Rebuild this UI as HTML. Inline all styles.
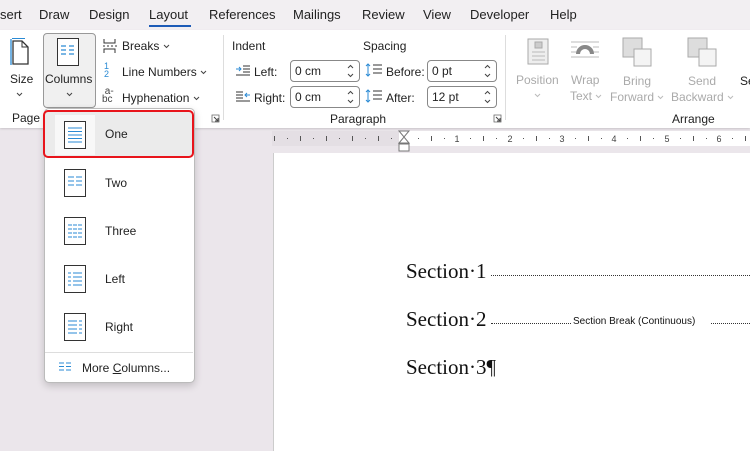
<!DOCTYPE html>
<html><head><meta charset="utf-8"><style>
*{margin:0;padding:0;box-sizing:border-box}
body{width:750px;height:451px;overflow:hidden;background:#ebe6eb;font-family:"Liberation Sans",sans-serif;position:relative;color:#222}
.a{position:absolute;white-space:nowrap}
.tabs{left:0;top:0;width:750px;height:30px;background:#f2eff2}
.tab{top:7px;font-size:13px;color:#222}
.rib{left:0;top:30px;width:750px;height:98px;background:#fff;box-shadow:0 1px 2px rgba(0,0,0,.15)}
.t12{font-size:12px}
.gray{color:#aaa}
.sep{width:1px;background:#ddd}
.spin{width:70px;height:22px;border:1px solid #888;border-radius:4px;font-size:12px;padding:3px 4px;background:#fff}
.spin svg{position:absolute;right:5px;top:3px}
.doc{width:26px;height:28px;border:1.5px solid #333;background:#fff}
.menu{left:44px;top:108px;width:151px;height:275px;background:#fff;border:1px solid #bbb;border-radius:5px;box-shadow:0 3px 8px rgba(0,0,0,.18)}
.item{font-size:12px}
.ser{font-family:"Liberation Serif",serif;font-size:21px;color:#111}
.dots{border-bottom:1px dotted #333;height:1px}
.r{position:absolute;top:134px;font-size:9px;color:#444;transform:translateX(-50%)}
.tk{position:absolute;top:136px;width:1px;height:5px;background:#555}
.dt{position:absolute;top:138px;width:1px;height:1px;background:#555}
.cv{display:inline-block;vertical-align:middle}
</style></head><body>
<div class="a tabs"></div>
<div class="a tab" style="left:0">sert</div>
<div class="a tab" style="left:39px">Draw</div>
<div class="a tab" style="left:89px">Design</div>
<div class="a tab" style="left:149px">Layout</div>
<div class="a" style="left:149px;top:25px;width:42px;height:2px;background:#1d5bb7"></div>
<div class="a tab" style="left:209px">References</div>
<div class="a tab" style="left:293px">Mailings</div>
<div class="a tab" style="left:362px">Review</div>
<div class="a tab" style="left:423px">View</div>
<div class="a tab" style="left:470px">Developer</div>
<div class="a tab" style="left:550px">Help</div>

<div class="a rib"></div>
<svg class="a" style="left:6px;top:37px" width="24" height="30"><path d="M7 4h9l6 6v17H7z" fill="#fff" stroke="#333" stroke-width="1.3"/><path d="M16 4v6h6" fill="none" stroke="#333"/><path d="M5 2v26" stroke="#2a8ad4" stroke-width="1.3"/><path d="M6 1.5h13" stroke="#2a8ad4"/></svg>
<div class="a t12" style="left:10px;top:72px">Size</div>
<svg class="a" style="left:16px;top:92px" width="7" height="5"><path d="M1 1l2.5 2.5L6 1" fill="none" stroke="#444"/></svg>
<div class="a t12" style="left:12px;top:111px">Page</div>
<div class="a" style="left:43px;top:33px;width:53px;height:75px;background:#f0f0f0;border:1px solid #999;border-radius:4px"></div>
<div class="a doc" style="left:57px;top:38px;width:22px;height:28px;border-width:1.3px"></div>
<svg class="a" style="left:60px;top:44px" width="16" height="16"><g stroke="#2a8ad4" stroke-width="1.2"><path d="M1 2h5M9 2h5M1 6h5M9 6h5M1 10h5M9 10h5"/></g></svg>
<div class="a t12" style="left:45px;top:72px">Columns</div>
<svg class="a" style="left:66px;top:92px" width="7" height="5"><path d="M1 1l2.5 2.5L6 1" fill="none" stroke="#444"/></svg>
<svg class="a" style="left:102px;top:38px" width="16" height="16"><path d="M2 1v4h11V1M2 15v-4h11v4M1 8h2M5 8h2M9 8h2M13 8h2" fill="none" stroke="#333"/></svg>
<div class="a t12" style="left:122px;top:39px">Breaks <svg class="cv" width="7" height="5"><path d="M1 1l2.5 2.5L6 1" fill="none" stroke="#444"/></svg></div>
<div class="a" style="left:104px;top:62px;font-size:9px;color:#2a8ad4;line-height:8px">1<br>2</div>
<div class="a t12" style="left:122px;top:65px">Line Numbers <svg class="cv" width="7" height="5"><path d="M1 1l2.5 2.5L6 1" fill="none" stroke="#444"/></svg></div>
<div class="a" style="left:102px;top:88px;font-size:10px;color:#444;line-height:8px">&nbsp;a-<br>bc</div>
<div class="a t12" style="left:122px;top:91px">Hyphenation <svg class="cv" width="7" height="5"><path d="M1 1l2.5 2.5L6 1" fill="none" stroke="#444"/></svg></div>
<svg class="a" style="left:211px;top:114px" width="9" height="9"><path d="M1 1h7v7H1z" fill="none" stroke="#666" stroke-width=".8"/><path d="M3 3l4 4M7 4v3H4" fill="none" stroke="#444"/></svg>
<div class="a sep" style="left:223px;top:35px;height:85px"></div>
<div class="a t12" style="left:232px;top:39px">Indent</div>
<div class="a t12" style="left:363px;top:39px">Spacing</div>
<svg class="a" style="left:235px;top:64px" width="16" height="12"><path d="M1 5h5M4 3l2 2-2 2" fill="none" stroke="#2a8ad4"/><path d="M8 2h7M8 5h7M8 8h7M1 11h14" stroke="#333"/></svg>
<div class="a t12" style="left:254px;top:65px">Left:</div>
<div class="a spin" style="left:290px;top:60px">0 cm<svg width="7" height="14"><path d="M1 4l2.5-2.5L6 4M1 10l2.5 2.5L6 10" fill="none" stroke="#444"/></svg></div>
<svg class="a" style="left:235px;top:90px" width="16" height="12"><path d="M10 5h5M12 3l-2 2 2 2" fill="none" stroke="#2a8ad4"/><path d="M1 2h7M1 5h7M1 8h7M1 11h14" stroke="#333"/></svg>
<div class="a t12" style="left:254px;top:91px">Right:</div>
<div class="a spin" style="left:290px;top:86px">0 cm<svg width="7" height="14"><path d="M1 4l2.5-2.5L6 4M1 10l2.5 2.5L6 10" fill="none" stroke="#444"/></svg></div>
<svg class="a" style="left:365px;top:63px" width="18" height="14"><path d="M3 1v12M1 3l2-2 2 2M1 11l2 2 2-2" fill="none" stroke="#2a8ad4"/><path d="M8 2h9M8 6h9M8 10h9" stroke="#333"/></svg>
<div class="a t12" style="left:386px;top:65px">Before:</div>
<div class="a spin" style="left:427px;top:60px">0 pt<svg width="7" height="14"><path d="M1 4l2.5-2.5L6 4M1 10l2.5 2.5L6 10" fill="none" stroke="#444"/></svg></div>
<svg class="a" style="left:365px;top:89px" width="18" height="14"><path d="M3 1v12M1 3l2-2 2 2M1 11l2 2 2-2" fill="none" stroke="#2a8ad4"/><path d="M8 2h9M8 6h9M8 10h9" stroke="#333"/></svg>
<div class="a t12" style="left:386px;top:91px">After:</div>
<div class="a spin" style="left:427px;top:86px">12 pt<svg width="7" height="14"><path d="M1 4l2.5-2.5L6 4M1 10l2.5 2.5L6 10" fill="none" stroke="#444"/></svg></div>
<div class="a t12" style="left:330px;top:112px">Paragraph</div>
<svg class="a" style="left:493px;top:114px" width="9" height="9"><path d="M1 1h7v7H1z" fill="none" stroke="#666" stroke-width=".8"/><path d="M3 3l4 4M7 4v3H4" fill="none" stroke="#444"/></svg>
<div class="a sep" style="left:505px;top:35px;height:85px"></div>
<svg class="a" style="left:527px;top:38px" width="24" height="28"><rect x="1" y="1" width="20" height="25" fill="#eee" stroke="#aaa"/><rect x="8" y="4" width="7" height="6" fill="#ccc" stroke="#aaa"/><path d="M5 14h13M5 18h13M5 22h13" stroke="#bbb"/></svg>
<div class="a t12 gray" style="left:516px;top:73px">Position</div>
<svg class="a" style="left:534px;top:93px" width="7" height="5"><path d="M1 1l2.5 2.5L6 1" fill="none" stroke="#bbb"/></svg>
<svg class="a" style="left:570px;top:40px" width="30" height="20"><path d="M1 2h28M1 7h6M23 7h6M1 12h6M23 12h6M1 17h28" stroke="#bbb"/><path d="M8 14a7 7 0 0 1 14 0" fill="none" stroke="#888" stroke-width="4"/></svg>
<div class="a t12 gray" style="left:571px;top:73px">Wrap</div>
<div class="a t12 gray" style="left:570px;top:89px">Text <svg class="cv" width="7" height="5"><path d="M1 1l2.5 2.5L6 1" fill="none" stroke="#bbb"/></svg></div>
<svg class="a" style="left:622px;top:37px" width="30" height="30"><rect x="1" y="1" width="19" height="19" fill="#ddd" stroke="#aaa"/><rect x="12" y="12" width="17" height="17" fill="#f4f4f4" stroke="#aaa"/></svg>
<div class="a t12 gray" style="left:623px;top:74px">Bring</div>
<div class="a t12 gray" style="left:610px;top:90px">Forward <svg class="cv" width="7" height="5"><path d="M1 1l2.5 2.5L6 1" fill="none" stroke="#bbb"/></svg></div>
<svg class="a" style="left:687px;top:37px" width="30" height="30"><rect x="1" y="1" width="19" height="19" fill="#ddd" stroke="#aaa"/><rect x="12" y="12" width="17" height="17" fill="#f4f4f4" stroke="#aaa"/></svg>
<div class="a t12 gray" style="left:688px;top:74px">Send</div>
<div class="a t12 gray" style="left:671px;top:90px">Backward <svg class="cv" width="7" height="5"><path d="M1 1l2.5 2.5L6 1" fill="none" stroke="#bbb"/></svg></div>
<div class="a t12" style="left:740px;top:74px">Se</div>
<div class="a t12" style="left:672px;top:112px">Arrange</div>

<!-- ruler -->
<div class="a" style="left:272px;top:131px;width:127px;height:15px;background:#e4dfe4"></div>
<div class="a" style="left:399px;top:131px;width:351px;height:15px;background:#fff"></div>
<div class="tk" style="left:274px"></div><div class="dt" style="left:287px"></div><div class="tk" style="left:300px"></div><div class="dt" style="left:313px"></div><div class="tk" style="left:326px"></div><div class="dt" style="left:339px"></div><div class="tk" style="left:352px"></div><div class="dt" style="left:365px"></div><div class="tk" style="left:378px"></div><div class="dt" style="left:391px"></div>
<div class="dt" style="left:418px"></div><div class="tk" style="left:431px"></div><div class="dt" style="left:444px"></div><span class="r" style="left:457px">1</span>
<div class="dt" style="left:470px"></div><div class="tk" style="left:483px"></div><div class="dt" style="left:496px"></div><span class="r" style="left:510px">2</span>
<div class="dt" style="left:523px"></div><div class="tk" style="left:536px"></div><div class="dt" style="left:549px"></div><span class="r" style="left:562px">3</span>
<div class="dt" style="left:575px"></div><div class="tk" style="left:588px"></div><div class="dt" style="left:601px"></div><span class="r" style="left:614px">4</span>
<div class="dt" style="left:627px"></div><div class="tk" style="left:640px"></div><div class="dt" style="left:653px"></div><span class="r" style="left:667px">5</span>
<div class="dt" style="left:680px"></div><div class="tk" style="left:693px"></div><div class="dt" style="left:706px"></div><span class="r" style="left:719px">6</span>
<div class="dt" style="left:732px"></div><div class="tk" style="left:745px"></div>
<svg class="a" style="left:398px;top:130px" width="13" height="23"><path d="M1 1h10L6 7zM1 13h10L6 7z" fill="#fff" stroke="#777"/><rect x="1" y="14" width="10" height="7" fill="#fff" stroke="#777"/></svg>
<div class="a" style="left:273px;top:153px;width:477px;height:298px;background:#fff;border-left:1px solid #ccc"></div>
<div class="a ser" style="left:406px;top:259px">Section·1</div>
<div class="a dots" style="left:491px;top:275px;width:259px"></div>
<div class="a ser" style="left:406px;top:307px">Section·2</div>
<div class="a dots" style="left:491px;top:323px;width:80px"></div>
<div class="a" style="left:573px;top:316px;font-size:10px;color:#111">Section Break (Continuous)</div>
<div class="a dots" style="left:711px;top:323px;width:39px"></div>
<div class="a ser" style="left:406px;top:355px">Section·3¶</div>

<div class="a menu"></div>
<div class="a" style="left:43px;top:110px;width:151px;height:48px;background:#ebebeb;border:2px solid #e8141b;border-radius:5px"></div>
<div class="a" style="left:55px;top:115px;width:40px;height:40px;background:#f8f8f8"></div>
<div class="a doc" style="left:64px;top:121px;width:22px;height:28px;border-width:1.3px"></div>
<svg class="a" style="left:67px;top:126px" width="16" height="18"><path d="M1 2h14M1 5.5h14M1 9h14M1 12.5h14M1 16h14" stroke="#2a8ad4" stroke-width="1.1"/></svg>
<div class="a item" style="left:105px;top:127px">One</div>
<div class="a doc" style="left:64px;top:169px;width:22px;height:28px;border-width:1.3px"></div>
<svg class="a" style="left:67px;top:174px" width="16" height="18"><path d="M1 3h6M9 3h6M1 7h6M9 7h6M1 11h6M9 11h6" stroke="#2a8ad4" stroke-width="1.1"/></svg>
<div class="a item" style="left:105px;top:176px">Two</div>
<div class="a doc" style="left:64px;top:217px;width:22px;height:28px;border-width:1.3px"></div>
<svg class="a" style="left:67px;top:222px" width="16" height="18"><path d="M1 3h4M6 3h4M11 3h4M1 7h4M6 7h4M11 7h4M1 11h4M6 11h4M11 11h4M1 15h4M6 15h4M11 15h4" stroke="#2a8ad4" stroke-width="1.1"/></svg>
<div class="a item" style="left:105px;top:224px">Three</div>
<div class="a doc" style="left:64px;top:265px;width:22px;height:28px;border-width:1.3px"></div>
<svg class="a" style="left:67px;top:270px" width="16" height="18"><path d="M1 3h3M6 3h9M1 7h3M6 7h9M1 11h3M6 11h9M1 15h3M6 15h9" stroke="#2a8ad4" stroke-width="1.1"/></svg>
<div class="a item" style="left:105px;top:272px">Left</div>
<div class="a doc" style="left:64px;top:313px;width:22px;height:28px;border-width:1.3px"></div>
<svg class="a" style="left:67px;top:318px" width="16" height="18"><path d="M1 3h9M12 3h3M1 7h9M12 7h3M1 11h9M12 11h3M1 15h9M12 15h3" stroke="#2a8ad4" stroke-width="1.1"/></svg>
<div class="a item" style="left:105px;top:320px">Right</div>
<div class="a" style="left:45px;top:352px;width:148px;height:1px;background:#ddd"></div>
<svg class="a" style="left:58px;top:362px" width="14" height="10"><path d="M1 1h5M8 1h5M1 4.5h5M8 4.5h5M1 8h5M8 8h5" stroke="#2a8ad4" stroke-width="1"/></svg>
<div class="a item" style="left:82px;top:361px">More <u>C</u>olumns...</div>
</body></html>
